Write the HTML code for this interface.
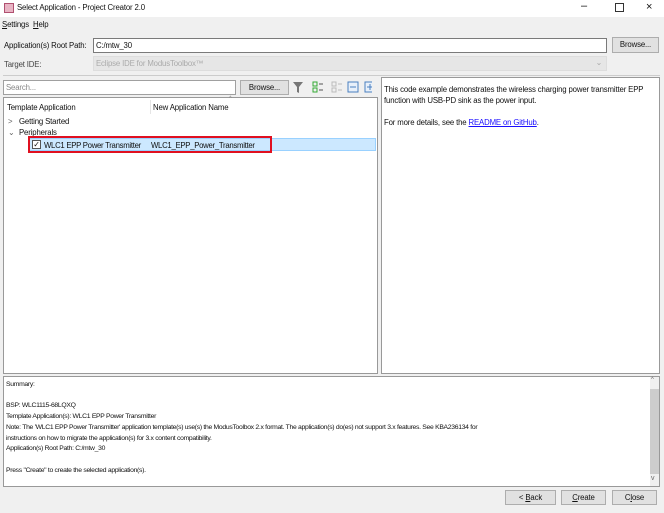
<!DOCTYPE html>
<html><head><style>
*{box-sizing:border-box;margin:0;padding:0}
body{width:664px;height:513px;background:#f0f0f0;font-family:"Liberation Sans",sans-serif;font-size:7.8px;letter-spacing:-0.15px;color:#111;position:relative;overflow:hidden}
.a{position:absolute;white-space:nowrap}
.inp{position:absolute;background:#fff;border:1px solid #a0a0a0}
.btn{position:absolute;background:#e1e1e1;border:1px solid #adadad;text-align:center;line-height:14px}
</style></head><body>
<div class="a" style="left:0;top:0;width:664px;height:17px;background:#fff"></div>
<div class="a" style="left:4px;top:3px;width:10px;height:10px;background:#e8b4c4;border:1px solid #b05070"></div>
<div class="a" style="left:17px;top:3px">Select Application - Project Creator 2.0</div>
<div class="a" style="left:581px;top:0px;font-size:11px">&#8211;</div>
<div class="a" style="left:615px;top:3px;width:9px;height:9px;border:1px solid #333"></div>
<div class="a" style="left:646px;top:1px;font-size:11px">&#215;</div>
<div class="a" style="left:2px;top:20px"><u>S</u>ettings&nbsp;&nbsp;<u>H</u>elp</div>
<div class="a" style="left:4px;top:41px">Application(s) Root Path:</div>
<div class="inp" style="left:93px;top:38px;width:514px;height:15px;border-color:#7a7a7a"><span class="a" style="left:2px;top:2px">C:/mtw_30</span></div>
<div class="btn" style="left:612px;top:37px;width:47px;height:16px">Browse...</div>
<div class="a" style="left:4px;top:60px;color:#444">Target IDE:</div>
<div class="inp" style="left:93px;top:56px;width:514px;height:15px;background:#e6e6e6;border-color:#ddd;color:#aaa"><span class="a" style="left:2px;top:2px">Eclipse IDE for ModusToolbox™</span><span class="a" style="right:4px;top:1px">&#8964;</span></div>
<div class="a" style="left:3px;top:75px;width:657px;height:1px;background:#ccc"></div>
<div class="inp" style="left:3px;top:80px;width:233px;height:15px"><span class="a" style="left:2px;top:2px;color:#888">Search...</span></div>
<div class="btn" style="left:240px;top:80px;width:49px;height:15px">Browse...</div>
<svg class="a" style="left:292px;top:80px" width="80" height="15">
<path d="M1 2h10l-4 5v6l-2-1v-5z" fill="#777"/>
<rect x="21" y="2" width="4" height="4" fill="none" stroke="#3a3" /><rect x="21" y="8" width="4" height="4" fill="none" stroke="#3a3"/><path d="M27 4h4M27 10h4" stroke="#555"/>
<rect x="40" y="2" width="4" height="4" fill="none" stroke="#bbb"/><rect x="40" y="8" width="4" height="4" fill="none" stroke="#bbb"/><path d="M46 4h4M46 10h4" stroke="#bbb"/>
<rect x="56" y="2" width="10" height="10" fill="#e8f0fa" stroke="#4a7fc0"/><path d="M58 7h6" stroke="#4a7fc0"/>
<rect x="73" y="2" width="10" height="10" fill="#e8f0fa" stroke="#4a7fc0"/><path d="M75 7h6M78 4v6" stroke="#4a7fc0"/>
</svg>
<div class="inp" style="left:3px;top:97px;width:375px;height:277px;border-color:#999"></div>
<div class="a" style="left:229px;top:96px;font-size:6px;color:#888">^</div>
<div class="a" style="left:7px;top:103px">Template Application</div>
<div class="a" style="left:150px;top:100px;width:1px;height:14px;background:#e5e5e5"></div>
<div class="a" style="left:153px;top:103px">New Application Name</div>
<div class="a" style="left:8px;top:117px;color:#666">&gt;</div>
<div class="a" style="left:19px;top:117px">Getting Started</div>
<div class="a" style="left:8px;top:128px;color:#666">&#8964;</div>
<div class="a" style="left:19px;top:128px">Peripherals</div>
<div class="a" style="left:28px;top:138px;width:348px;height:13px;background:#cce8ff;border:1px solid #99d1ff"></div>
<div class="a" style="left:28px;top:136px;width:244px;height:17px;border:2px solid #e01020"></div>
<div class="a" style="left:32px;top:140px;width:9px;height:9px;background:#fff;border:1px solid #555;font-size:8px;line-height:8px;text-align:center">&#10003;</div>
<div class="a" style="left:44px;top:141px;letter-spacing:-0.3px">WLC1 EPP Power Transmitter</div>
<div class="a" style="left:151px;top:141px;letter-spacing:-0.3px">WLC1_EPP_Power_Transmitter</div>
<div class="inp" style="left:381px;top:77px;width:279px;height:297px;border-color:#999"></div>
<div class="a" style="left:384px;top:84px;line-height:11px;font-size:7.8px;letter-spacing:-0.15px">This code example demonstrates the wireless charging power transmitter EPP<br>function with USB-PD sink as the power input.<br><br>For more details, see the <u style="color:#1a0dff">README on GitHub</u>.</div>
<div class="inp" style="left:3px;top:376px;width:657px;height:111px;border-color:#999"></div>
<div class="a" style="left:650px;top:377px;width:9px;height:109px;background:#f0f0f0"></div>
<div class="a" style="left:650px;top:389px;width:9px;height:85px;background:#cdcdcd"></div>
<div class="a" style="left:651px;top:377px;font-size:6px;color:#666">^</div>
<div class="a" style="left:651px;top:475px;font-size:7px;color:#666">v</div>
<div class="a" style="left:6px;top:380px;line-height:10.7px;font-size:6.8px;letter-spacing:-0.3px">Summary:<br><br>BSP: WLC1115-68LQXQ<br>Template Application(s): WLC1 EPP Power Transmitter<br>Note: The 'WLC1 EPP Power Transmitter' application template(s) use(s) the ModusToolbox 2.x format. The application(s) do(es) not support 3.x features. See KBA236134 for<br>instructions on how to migrate the application(s) for 3.x content compatibility.<br>Application(s) Root Path: C:/mtw_30<br><br>Press "Create" to create the selected application(s).</div>
<div class="btn" style="left:505px;top:490px;width:51px;height:15px">&lt; <u>B</u>ack</div>
<div class="btn" style="left:561px;top:490px;width:45px;height:15px"><u>C</u>reate</div>
<div class="btn" style="left:612px;top:490px;width:45px;height:15px">C<u>l</u>ose</div>
</body></html>
